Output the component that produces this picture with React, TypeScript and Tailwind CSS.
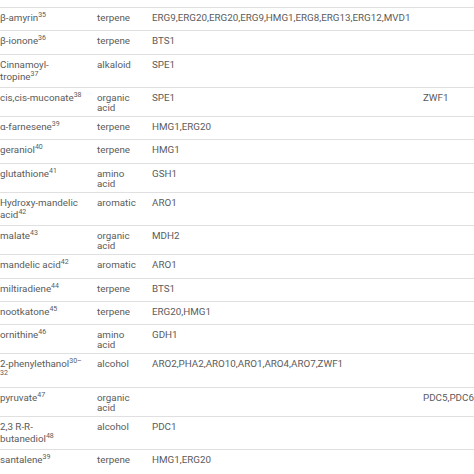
import React from 'react';

type Row = {
  name: React.ReactNode[];
  type: React.ReactNode;
  genes: string;
  extra?: string;
};

// raised with a relative offset so it does not grow the line box
const Sup = ({ children }: { children: React.ReactNode }) => (
  <span className="relative -top-[4px] text-[7px] leading-none">{children}</span>
);

const rows: Row[] = [
  { name: [<>β-amyrin<Sup>35</Sup></>], type: 'terpene', genes: 'ERG9,ERG20,ERG20,ERG9,HMG1,ERG8,ERG13,ERG12,MVD1' },
  { name: [<>β-ionone<Sup>36</Sup></>], type: 'terpene', genes: 'BTS1' },
  { name: ['Cinnamoyl-', <>tropine<Sup>37</Sup></>], type: 'alkaloid', genes: 'SPE1' },
  { name: [<>cis,cis-muconate<Sup>38</Sup></>], type: <>organic<br />acid</>, genes: 'SPE1', extra: 'ZWF1' },
  { name: [<>α-farnesene<Sup>39</Sup></>], type: 'terpene', genes: 'HMG1,ERG20' },
  { name: [<>geraniol<Sup>40</Sup></>], type: 'terpene', genes: 'HMG1' },
  { name: [<>glutathione<Sup>41</Sup></>], type: <>amino<br />acid</>, genes: 'GSH1' },
  { name: ['Hydroxy-mandelic', <>acid<Sup>42</Sup></>], type: 'aromatic', genes: 'ARO1' },
  { name: [<>malate<Sup>43</Sup></>], type: <>organic<br />acid</>, genes: 'MDH2' },
  { name: [<>mandelic acid<Sup>42</Sup></>], type: 'aromatic', genes: 'ARO1' },
  { name: [<>miltiradiene<Sup>44</Sup></>], type: 'terpene', genes: 'BTS1' },
  { name: [<>nootkatone<Sup>45</Sup></>], type: 'terpene', genes: 'ERG20,HMG1' },
  { name: [<>ornithine<Sup>46</Sup></>], type: <>amino<br />acid</>, genes: 'GDH1' },
  { name: [<>2-phenylethanol<Sup>30–</Sup></>, <Sup>32</Sup>], type: 'alcohol', genes: 'ARO2,PHA2,ARO10,ARO1,ARO4,ARO7,ZWF1' },
  { name: [<>pyruvate<Sup>47</Sup></>], type: <>organic<br />acid</>, genes: '', extra: 'PDC5,PDC6' },
  { name: ['2,3 R-R-', <>butanediol<Sup>48</Sup></>], type: 'alcohol', genes: 'PDC1' },
  { name: [<>santalene<Sup>39</Sup></>], type: 'terpene', genes: 'HMG1,ERG20' },
];

export default function App() {
  return (
    <div
      className="h-[474px] w-[474px] overflow-hidden bg-white pt-[7px] text-[#5b5b5b]"
      style={{ fontFamily: 'Roboto, "Liberation Sans", sans-serif' }}
    >
      <table className="w-[560px] table-fixed border-collapse text-[9.8px] leading-[10px]">
        <colgroup>
          <col className="w-[97px]" />
          <col className="w-[55px]" />
          <col className="w-[271px]" />
          <col className="w-[137px]" />
        </colgroup>
        <tbody>
          {rows.map((r, i) => (
            <tr key={i} className="border-t border-[#e0e0e0]">
              <td className={`whitespace-nowrap pt-[5px] align-top ${r.name.length > 1 ? 'pb-[5.3px]' : 'pb-[7.3px]'}`}>
                {r.name.map((line, j) => (
                  <div key={j} className={j > 0 ? 'mt-[2px]' : ''}>
                    {line}
                  </div>
                ))}
              </td>
              <td className="whitespace-nowrap pt-[5px] pb-[3.2px] align-top">{r.type}</td>
              <td className="whitespace-nowrap pt-[5px] pb-[3.2px] align-top">{r.genes}</td>
              <td className="whitespace-nowrap pt-[5px] pb-[3.2px] align-top">{r.extra}</td>
            </tr>
          ))}
        </tbody>
      </table>
    </div>
  );
}
